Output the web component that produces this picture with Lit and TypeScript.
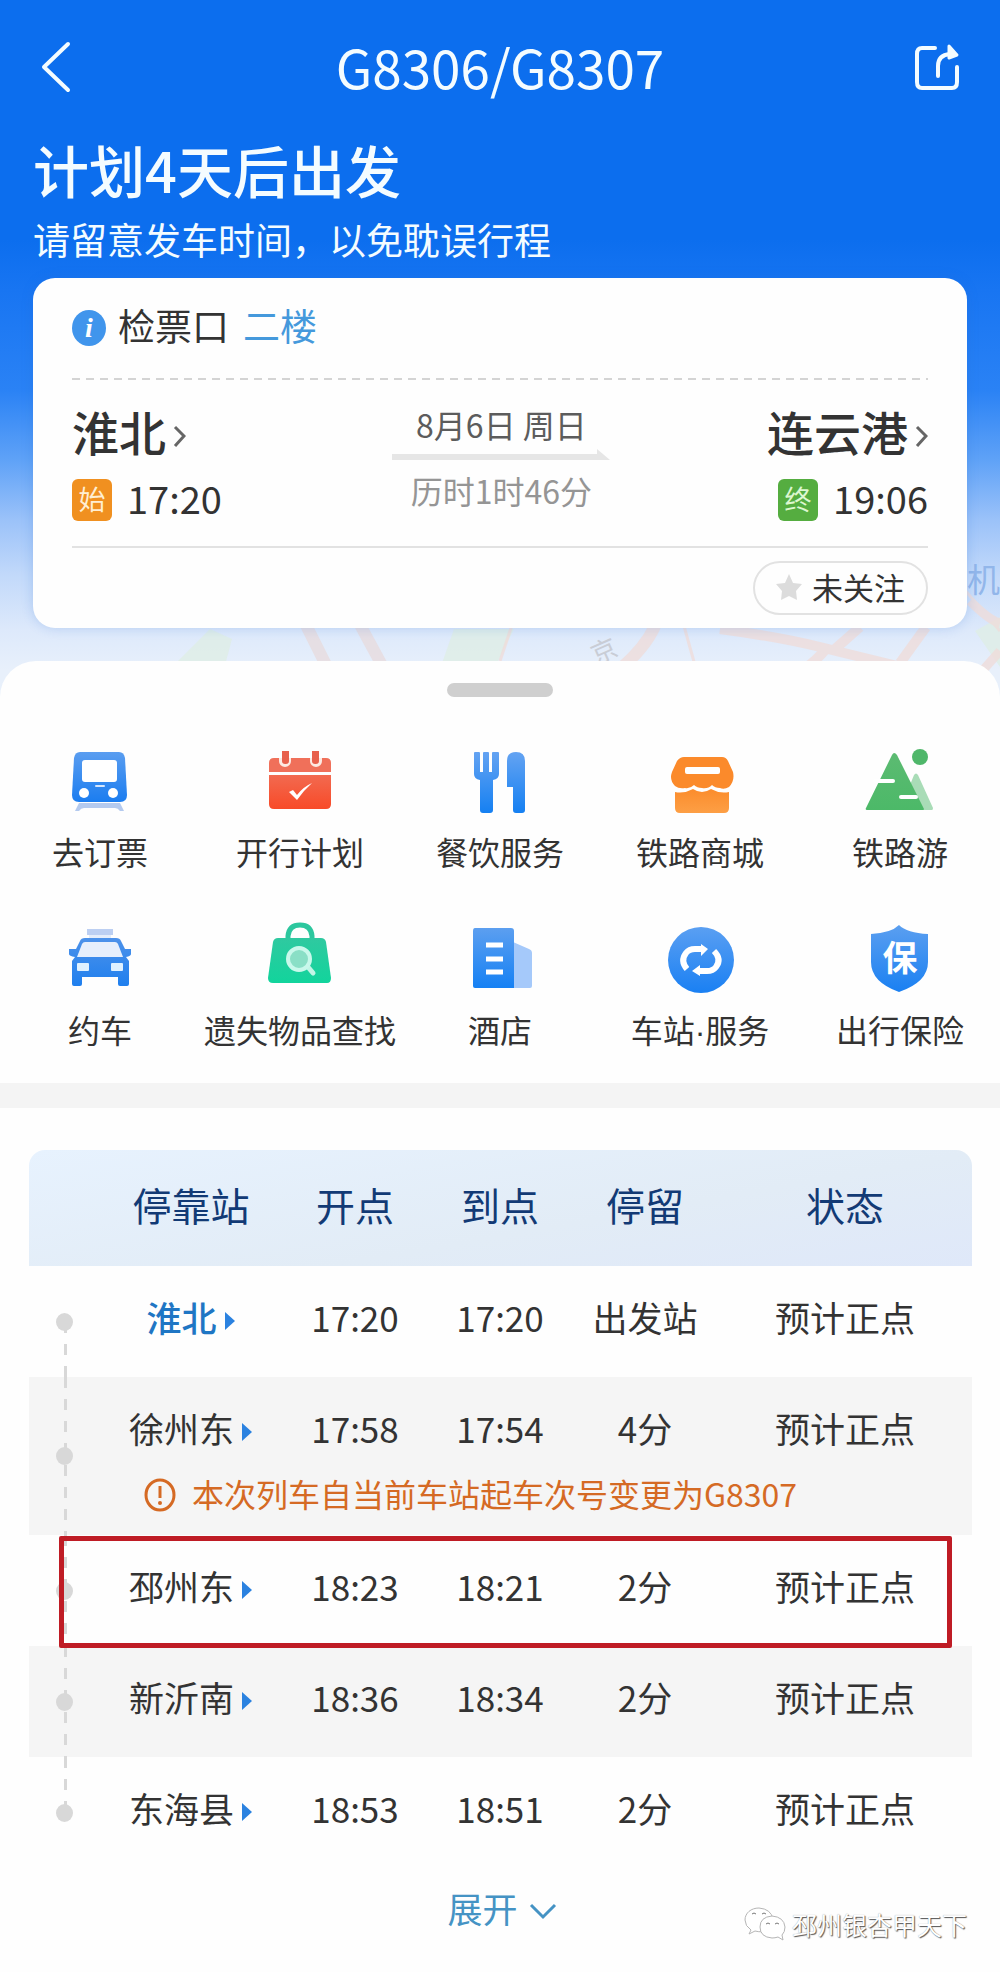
import { LitElement, html, svg, css, nothing, type SVGTemplateResult } from "lit";
import { customElement, property } from "lit/decorators.js";

type IconName =
  | "train" | "calendar" | "dining" | "store" | "mountain"
  | "taxi" | "lost" | "hotel" | "station" | "insurance";

const gradient = (id: string, from: string, to: string) => svg`
  <linearGradient id=${id} x1="0" y1="0" x2="0" y2="1">
    <stop offset="0" stop-color=${from} /><stop offset="1" stop-color=${to} />
  </linearGradient>`;

const ICONS: Record<IconName, SVGTemplateResult> = {
  train: svg`
    <defs>${gradient("g", "#5a9df0", "#1b7df0")}</defs>
    <path d="M14 56h41l4 8h-4q-2-3-5-3H19q-3 0-5 3h-4z" fill="#b4caef" />
    <path d="M15 5h39q5 0 6 6l2 37q0 7-7 7H14q-7 0-7-7l2-37q1-6 6-6z" fill="url(#g)" />
    <rect x="17" y="13" width="35" height="22" rx="3" fill="#fff" />
    <rect x="30" y="38" width="10" height="2" rx="1" fill="#d6e6fc" />
    <circle cx="19" cy="46" r="5" fill="#fff" /><circle cx="48" cy="46" r="5" fill="#fff" />`,
  calendar: svg`
    <defs>${gradient("g", "#f26a50", "#f84a28")}</defs>
    <path d="M4 25v-9q0-5 5-5h52q5 0 5 5v9z" fill="#f0705a" />
    <path d="M4 28h62v29q0 5-5 5H9q-5 0-5-5z" fill="url(#g)" />
    <path d="M20 9v5M51 9v5" stroke="#fde9e2" stroke-width="12" stroke-linecap="round" />
    <path d="M10 0h52v11H10z" fill="#fefefe" />
    <path d="M17 4h7v10q0 3-3 3h-1q-3 0-3-3zM47 4h7v10q0 3-3 3h-1q-3 0-3-3z" fill="#e8604c" />
    <path d="M24 45l4-2 4 5q6-8 15-12-8 7-15 17z" fill="#fff" />`,
  dining: svg`
    <defs>${gradient("g", "#64a3f2", "#1580f2")}</defs>
    <path d="M9 6q0-1 1-1h4q1 0 1 1v19h3V6q0-1 1-1h4q1 0 1 1v19h3V6q0-1 1-1h5q1 0 1 1v21q0 5-6 6v30q0 3-3 3h-7q-3 0-3-3V33q-6-1-6-6z" fill="url(#g)" />
    <path d="M42 14q0-9 9-9t9 9v49q0 3-3 3h-6q-3 0-3-3V40h-6z" fill="url(#g)" />`,
  store: svg`
    <defs>${gradient("g", "#fb8c2c", "#fd9f45")}</defs>
    <path d="M19 10h38q4 0 6 4l5 11q2 9-4 15-5 3-9 1-5 0-8-3-4 4-10 3-5 0-8-3-4 4-9 3-6 1-10-2-6-6-3-14l5-11q3-4 7-4z" fill="#fb8a2b" />
    <path d="M10 45q9 2 18-3 9 6 18 0 9 5 18 3v16q0 5-5 5H15q-5 0-5-5z" fill="url(#g)" />
    <rect x="20" y="20" width="35" height="7" rx="2" fill="#fff" />`,
  mountain: svg`
    <defs>${gradient("g", "#5cbb72", "#4cb968")}</defs>
    <path d="M49 28q2-3 4 0l15 33q0 2-1 2H35z" fill="#a9dcb7" />
    <path d="M27 8q2-4 5 0l27 54q0 1-1 1H2q-2 0-1-2z" fill="url(#g)" />
    <circle cx="55" cy="10" r="8" fill="#4fb76a" />
    <rect x="8" y="32" width="22" height="4" rx="2" fill="#fff" />
    <rect x="34" y="48" width="19" height="4" rx="2" fill="#fff" />`,
  taxi: svg`
    <defs>${gradient("g", "#4d92ea", "#1f7fee")}</defs>
    <rect x="22" y="4" width="26" height="6" fill="#bccff2" />
    <rect x="24" y="10" width="22" height="3" fill="#e4edfb" />
    <path d="M4 24h7l4-8q1-3 5-3h31q4 0 5 3l4 8h6v5q0 2-5 3l3 4v23q0 2-2 2h-7q-2 0-2-2v-7H17v7q0 2-2 2H9q-2 0-2-2V36l3-4q-6-1-6-3z" fill="url(#g)" />
    <path d="M20 17h30q2 0 3 2l5 13H12l5-13q1-2 3-2z" fill="#e6effc" />
    <rect x="12" y="38" width="12" height="8" rx="1" fill="#dff1ff" />
    <rect x="46" y="38" width="12" height="8" rx="1" fill="#dff1ff" />`,
  lost: svg`
    <defs>${gradient("g", "#2fc9a0", "#12d49c")}</defs>
    <path d="M23 15V11Q24 0 35 0t12 11v4" fill="none" stroke="#2cc79e" stroke-width="5" />
    <path d="M13 13h43q4 0 5 4l5 36q0 5-4 5H8q-5 0-5-5l5-36q1-4 5-4z" fill="url(#g)" />
    <path d="M43 42l5 6" stroke="#c2f5e6" stroke-width="5" stroke-linecap="round" />
    <circle cx="34" cy="34" r="11" fill="#8adfc6" stroke="#c9f8eb" stroke-width="4" />`,
  hotel: svg`
    <defs>${gradient("g", "#5c9ff0", "#1581f4")}</defs>
    <path d="M48 17l16 7q3 1 3 4v33q0 2-2 2H48z" fill="#a5c9fa" />
    <path d="M10 3h36q3 0 3 3v57H10q-2 0-2-2V6q0-3 2-3z" fill="url(#g)" />
    <path d="M21 20h17M21 34h17M21 47h17" stroke="#fff" stroke-width="5" />`,
  station: svg`
    <defs>${gradient("g", "#5a9ff2", "#1a80f3")}</defs>
    <circle cx="36" cy="35" r="33" fill="url(#g)" />
    <path d="M22 44q-7-8-1-16 3-4 9-4h7M49 26q8 8 2 16-3 4-9 4h-7" fill="none" stroke="#fff" stroke-width="6" />
    <path d="M36 19l7 5-7 7zM35 40l-8 6 8 5z" fill="#fff" />`,
  insurance: svg`
    <defs>${gradient("g", "#5b9ff0", "#1a80f2")}</defs>
    <path d="M34 0Q42 8 63 9v28q0 20-29 30Q6 57 6 37V9Q26 8 34 0z" fill="url(#g)" />
    <text x="35" y="46" text-anchor="middle" font-size="35" font-weight="700" fill="#fff">保</text>`,
};

@customElement("service-icon")
export class ServiceIcon extends LitElement {
  @property() name: IconName = "train";

  static styles = css`
    :host { display: block; }
    .icon { display: block; width: 70px; height: 70px; overflow: visible; }
  `;

  render() {
    return html`<svg class="icon" viewBox="0 0 70 70" aria-hidden="true">${ICONS[this.name]}</svg>`;
  }
}

interface Stop {
  station: string;
  depart: string;
  arrive: string;
  stay: string;
  status: string;
  notice?: string;
  current?: boolean;
  marked?: boolean;
}

const SERVICES: { icon: IconName; label: string }[] = [
  { icon: "train", label: "去订票" },
  { icon: "calendar", label: "开行计划" },
  { icon: "dining", label: "餐饮服务" },
  { icon: "store", label: "铁路商城" },
  { icon: "mountain", label: "铁路游" },
  { icon: "taxi", label: "约车" },
  { icon: "lost", label: "遗失物品查找" },
  { icon: "hotel", label: "酒店" },
  { icon: "station", label: "车站·服务" },
  { icon: "insurance", label: "出行保险" },
];

const STOPS: Stop[] = [
  { station: "淮北", depart: "17:20", arrive: "17:20", stay: "出发站", status: "预计正点", current: true },
  { station: "徐州东", depart: "17:58", arrive: "17:54", stay: "4分", status: "预计正点", notice: "本次列车自当前车站起车次号变更为G8307" },
  { station: "邳州东", depart: "18:23", arrive: "18:21", stay: "2分", status: "预计正点", marked: true },
  { station: "新沂南", depart: "18:36", arrive: "18:34", stay: "2分", status: "预计正点" },
  { station: "东海县", depart: "18:53", arrive: "18:51", stay: "2分", status: "预计正点" },
];

@customElement("app-root")
export class AppRoot extends LitElement {
  static styles = css`
    :host {
      display: block;
      min-height: 100vh;
      background: #fefefe;
      color: #333;
      font-family: "Noto Sans CJK SC", "Noto Sans", sans-serif;
      font-size: 35px;
    }
    * { box-sizing: border-box; }
    h1, h2, p { margin: 0; font-weight: 400; }
    button { border: 0; padding: 0; background: none; font: inherit; color: inherit; cursor: pointer; }
    a { color: inherit; text-decoration: none; }
    svg { display: block; flex: none; }

    .page { position: relative; }
    .hero {
      position: relative;
      padding: 0 33px 73px;
      color: #f4fcff;
      background: linear-gradient(#0c6eee 0, #0c6eee 240px, #1875f2 290px, #2a82f5 390px, #5fa2f7 460px, #9bc2f9 520px, #c2d9fa 575px, #dde9fb 630px, #e8f0fb 670px);
    }
    .map { position: absolute; left: 0; bottom: 0; width: 100%; height: 160px; }
    .topbar { display: grid; grid-template-columns: 60px 1fr 60px; align-items: center; height: 134px; }
    .title { padding-bottom: 3px; font-size: 53px; line-height: 60px; text-align: center; }
    .back { justify-self: start; padding-left: 5px; }
    .share { justify-self: end; padding-right: 7px; }
    .plan { font-size: 56px; line-height: 70px; font-weight: 500; }
    .hint { font-size: 37px; line-height: 70px; }

    .card {
      position: relative;
      margin-top: 4px;
      padding: 0 39px;
      border-radius: 22px;
      background: #fefefe;
      color: #333;
      box-shadow: 0 0 12px rgba(40, 110, 210, 0.22);
    }
    .gate { display: flex; align-items: center; gap: 12px; height: 100px; padding-bottom: 6px; font-size: 37px; line-height: 48px; }
    .info { margin-top: 6px; }
    .floor { margin-left: 2px; color: #4599dc; }
    .dashes { height: 2px; background: repeating-linear-gradient(90deg, #d4d4d4 0 8px, transparent 8px 14px); }
    .journey { display: flex; justify-content: space-between; padding: 20px 0 12px; border-bottom: 2px solid #e2e2e2; }
    .end { display: flex; flex-direction: column; align-items: flex-start; }
    .end.last { align-items: flex-end; }
    .city { display: flex; align-items: center; gap: 4px; font-size: 47px; line-height: 62px; font-weight: 500; }
    .chevron { margin-top: 10px; }
    .time { display: flex; align-items: center; gap: 15px; font-size: 38px; line-height: 72px; }
    .badge { width: 40px; height: 42px; margin-top: 4px; border-radius: 6px; font-size: 27px; line-height: 40px; text-align: center; color: #ffeed2; background: #f09020; }
    .last .badge { color: #ddf7cf; background: #55ad40; }
    .middle { display: flex; flex-direction: column; align-items: center; padding: 6px 0 0 14px; font-size: 32px; line-height: 36px; color: #5c5c5c; }
    .arrow { margin: 7px 0 9px; }
    .duration { color: #959595; }
    .follow-row { display: flex; justify-content: flex-end; align-items: center; height: 80px; }
    .follow { display: flex; align-items: center; gap: 9px; height: 54px; padding: 0 21px 2px 20px; border: 2px solid #e2e2e2; border-radius: 27px; font-size: 31px; line-height: 46px; }

    .sheet { position: relative; margin-top: -40px; padding-top: 22px; border-radius: 36px 36px 0 0; background: #fefefe; }
    .handle { width: 106px; height: 14px; margin: 0 auto; border-radius: 7px; background: #cfcfcf; }
    .services { display: grid; grid-template-columns: repeat(5, 1fr); row-gap: 49px; padding: 50px 0 29px; }
    .service { display: flex; flex-direction: column; align-items: center; gap: 15px; font-family: "Liberation Sans", "Noto Sans CJK SC", sans-serif; font-size: 32px; line-height: 44px; white-space: nowrap; }
    .divider { height: 25px; background: #f4f4f4; }

    .stops { padding: 42px 28px 0 29px; }
    .table { width: 100%; table-layout: fixed; border-collapse: separate; border-spacing: 0; text-align: center; line-height: 50px; }
    .c-line { width: 71px; }
    .c-station { width: 182px; }
    .c-depart { width: 146px; }
    .c-arrive { width: 144px; }
    .c-stay { width: 146px; }
    .c-status { width: 254px; }
    .table th, .table td { padding: 0; }
    .table .head th { height: 116px; padding-bottom: 8px; font-size: 39px; font-weight: 400; color: #123a75; }
    .head { background: linear-gradient(170deg, #e7f2fe, #e2ecf6 60%, #dfe8f9); }
    .table thead { clip-path: inset(0 round 16px 16px 0 0); }
    .body-row { position: relative; }
    .body-row.marked { z-index: 1; }
    .table .body-row > td { height: 111px; padding-bottom: 9px; }
    .table .body-row.with-notice > td { height: 92px; padding: 10px 0 0; }
    .table .body-row > .rail { padding: 0; }
    .table .body-row.with-notice > .rail { padding: 0; }
    .odd { background: #f5f5f5; }
    .rail { position: relative; }
    .rail::before {
      content: "";
      position: absolute;
      top: 0; bottom: 0; left: 35px;
      width: 3px;
      background: repeating-linear-gradient(#d8d8d8 0 11px, transparent 11px 22px);
    }
    .first .rail::before { top: 50%; }
    .final .rail::before { bottom: 50%; }
    .dot { position: relative; display: block; width: 17px; height: 18px; margin: 0 auto; border-radius: 50%; background: #d8d8d8; }
    .link { display: inline-flex; align-items: center; gap: 7px; }
    .caret { margin-top: 8px; }
    .current .link { color: #1f76c4; font-weight: 500; }
    .notice-cell { height: 66px; vertical-align: top; text-align: left; }
    .notice { display: flex; align-items: center; gap: 16px; padding-left: 44px; font-size: 32px; line-height: 48px; color: #d56a24; white-space: nowrap; }
    .notice-icon { margin-top: 3px; }
    .mark { position: absolute; z-index: 1; top: 1px; left: 30px; right: 20px; bottom: -2px; border: 5px solid #bf1c25; border-radius: 2px; pointer-events: none; }

    .more { display: flex; align-items: center; gap: 11px; margin: 14px auto 0; padding-left: 4px; line-height: 52px; color: #4593c4; }
    .more-icon { margin-top: 8px; }
    .account { position: absolute; right: 33px; bottom: -8px; display: flex; align-items: center; gap: 6px; font-size: 25px; line-height: 36px; color: #fff; text-shadow: 1px 1px 1px #555, 0 0 1px #999; }
  `;

  private caret = html`<svg class="caret" width="12" height="20" viewBox="0 0 12 20" aria-hidden="true"><path d="M1 1l10 9-10 9z" fill="#2b82e0" /></svg>`;

  private chevron = html`<svg class="chevron" width="16" height="24" viewBox="0 0 16 24" aria-hidden="true"><path d="M5 3l9 9-9 10" fill="none" stroke="#666" stroke-width="3" /></svg>`;

  private renderStop(stop: Stop, index: number) {
    const classes = [
      "body-row",
      index % 2 ? "odd" : "",
      index === 0 ? "first" : "",
      index === STOPS.length - 1 ? "final" : "",
      stop.current ? "current" : "",
      stop.marked ? "marked" : "",
      stop.notice ? "with-notice" : "",
    ].filter(Boolean).join(" ");
    return html`
      <tr class=${classes}>
        <td class="rail" rowspan=${stop.notice ? 2 : 1}><span class="dot"></span></td>
        <td><a class="link" href="#">${stop.station}${this.caret}</a></td>
        <td>${stop.depart}</td>
        <td>${stop.arrive}</td>
        <td>${stop.stay}</td>
        <td>${stop.status}${stop.marked ? html`<span class="mark"></span>` : nothing}</td>
      </tr>
      ${stop.notice
        ? html`<tr class="odd">
            <td class="notice-cell" colspan="5">
              <p class="notice">
                <svg class="notice-icon" width="32" height="34" viewBox="0 0 32 34" aria-hidden="true">
                  <ellipse cx="16" cy="17" rx="14" ry="15" fill="none" stroke="#d56a24" stroke-width="3" />
                  <path d="M16 8v12" stroke="#d56a24" stroke-width="3" />
                  <circle cx="16" cy="25" r="2" fill="#d56a24" />
                </svg>
                ${stop.notice}
              </p>
            </td>
          </tr>`
        : nothing}
    `;
  }

  render() {
    return html`
      <main class="page">
        <header class="hero">
          <svg class="map" viewBox="0 0 1000 160" preserveAspectRatio="xMidYMax slice" aria-hidden="true">
            <g fill="#dfeee6" opacity="0.8">
              <path d="M170 128l40-40 22 10-8 30z" /><path d="M440 128l14-40 60 0-20 40z" /><path d="M975 90l25-14v50z" />
            </g>
            <g fill="none" stroke="#f0dcd9" stroke-width="9" opacity="0.75">
              <path d="M304 80l24 48M358 80l26 48" stroke="#e8dbdd" stroke-width="12" />
              <path d="M655 85q-10 22-35 43" stroke-width="12" />
              <path d="M720 88q60 8 100 18t90 22M835 108l25-22M900 122l26-36M826 108q-10 12-22 20" stroke-width="10" />
              <path d="M684 85l12 43M500 120l12-36M940 20l60 70" stroke-width="3" />
              <path d="M970 60q20 20 30 22M984 128l16-18" />
            </g>
            <text x="596" y="124" font-size="26" fill="#c9cdd6" transform="rotate(-24 596 124)">京</text>
            <text x="967" y="51" font-size="33" fill="#92b6ea">机</text>
          </svg>
          <nav class="topbar">
            <button class="back" aria-label="返回">
              <svg width="36" height="56" viewBox="0 0 36 56"><path d="M30 5L6 28l24 23" fill="none" stroke="#f4fcff" stroke-width="4" stroke-linejoin="round" stroke-linecap="round" /></svg>
            </button>
            <h1 class="title">G8306/G8307</h1>
            <button class="share" aria-label="分享">
              <svg width="48" height="50" viewBox="0 0 48 50" fill="none" stroke="#f4fcff" stroke-width="4" stroke-linejoin="round" stroke-linecap="round">
                <path d="M23 6H10q-5 0-5 6v28q0 6 5 6h30q5 0 5-6V25" />
                <path d="M26 34V24q0-11 12-12" />
                <path d="M37 4l8 9-8 3z" fill="#f4fcff" stroke-width="3" />
              </svg>
            </button>
          </nav>
          <h2 class="plan">计划4天后出发</h2>
          <p class="hint">请留意发车时间，以免耽误行程</p>

          <section class="card">
            <div class="gate">
              <svg class="info" width="34" height="36" viewBox="0 0 34 36" aria-hidden="true">
                <ellipse cx="17" cy="18" rx="17" ry="18" fill="#4095ec" />
                <text x="17" y="27" text-anchor="middle" font-family="Liberation Serif, serif" font-size="28" font-style="italic" font-weight="700" fill="#fff">i</text>
              </svg>
              <span>检票口</span><span class="floor">二楼</span>
            </div>
            <div class="dashes"></div>
            <div class="journey">
              <div class="end">
                <a class="city" href="#">淮北${this.chevron}</a>
                <div class="time"><span class="badge">始</span>17:20</div>
              </div>
              <div class="middle">
                <span>8月6日 周日</span>
                <svg class="arrow" width="218" height="14" viewBox="0 0 218 14" aria-hidden="true"><path d="M0 5h205V0l13 11H0z" fill="#e6e6e6" /></svg>
                <span class="duration">历时1时46分</span>
              </div>
              <div class="end last">
                <a class="city" href="#">连云港${this.chevron}</a>
                <div class="time"><span class="badge">终</span>19:06</div>
              </div>
            </div>
            <div class="follow-row">
              <button class="follow">
                <svg width="28" height="28" viewBox="0 0 28 28" aria-hidden="true"><path d="M14 1l4 9 9 1-6 7 1 9-8-4-8 4 1-9-6-7 9-1z" fill="#dcdcdc" /></svg>
                未关注
              </button>
            </div>
          </section>
        </header>

        <section class="sheet">
          <div class="handle"></div>
          <div class="services">
            ${SERVICES.map((s) => html`
              <a class="service" href="#"><service-icon name=${s.icon}></service-icon><span>${s.label}</span></a>
            `)}
          </div>
          <div class="divider"></div>

          <div class="stops">
            <table class="table">
              <colgroup>
                <col class="c-line" /><col class="c-station" /><col class="c-depart" />
                <col class="c-arrive" /><col class="c-stay" /><col class="c-status" />
              </colgroup>
              <thead>
                <tr class="head">
                  <th></th><th>停靠站</th><th>开点</th><th>到点</th><th>停留</th><th>状态</th>
                </tr>
              </thead>
              <tbody>${STOPS.map((s, i) => this.renderStop(s, i))}</tbody>
            </table>
          </div>
          <button class="more">
            展开
            <svg class="more-icon" width="28" height="18" viewBox="0 0 28 18" aria-hidden="true"><path d="M2 2l12 12L26 2" fill="none" stroke="#4593c4" stroke-width="3" /></svg>
          </button>
        </section>

        <div class="account">
          <svg width="42" height="34" viewBox="0 0 42 34" fill="#fff" stroke="#b5b5b5" stroke-width="1" aria-hidden="true">
            <path d="M15 1C7 1 1 6 1 13q0 6 6 10l-2 4 6-3q8 2 12-1 7-5 6-11-2-10-14-11z" />
            <path d="M28 9q-12 1-12 11t12 11q3 0 6-1l5 3-1-5q3-3 3-8-1-10-13-11z" />
            <path d="M8 7q2-2 4 0M18 7q2-2 4 0M22 17q2-2 4 0M31 17q2-2 4 0" fill="none" stroke="#777" />
          </svg>
          <span>邳州银杏甲天下</span>
        </div>
      </main>
    `;
  }
}
